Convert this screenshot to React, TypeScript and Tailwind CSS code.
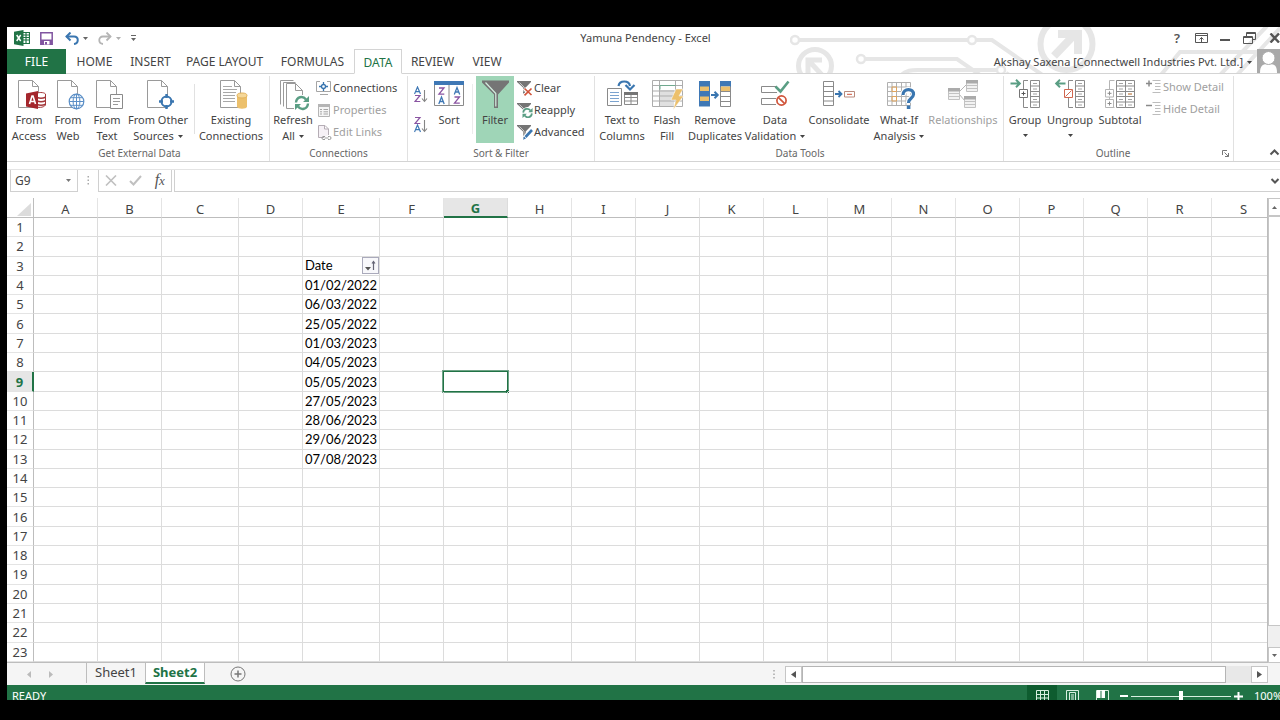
import type { FC, ReactNode } from 'react'
import { clsx } from 'clsx'

type ChildrenProps = { children?: ReactNode }

const Caret: FC<{ className?: string }> = ({ className }) => (
  <svg className={clsx('inline-block shrink-0', className)} width="5" height="3" viewBox="0 0 5 3" aria-hidden="true">
    <path d="M0 0h5L2.500 3z" fill="currentColor" />
  </svg>
)

/* ---------- ribbon icons, all on a 36x32 board ---------- */

const Board: FC<ChildrenProps> = ({ children }) => (
  <svg className="shrink-0" width="36" height="32" viewBox="0 0 36 32" fill="none" aria-hidden="true">
    {children}
  </svg>
)

const Page = () => (
  <>
    <path d="M7.500 1.500h14l6 6v21h-20z" fill="#fff" stroke="#9a9a9a" />
    <path d="M21.500 1.500v6h6" stroke="#9a9a9a" />
  </>
)

const AccessIcon = () => (
  <Board>
    <Page />
    <path d="M24 15c3-2 9-2 10.500 0v11c-2 3-8 3-10.500 1z" fill="#fff" stroke="#a4373a" />
    <path d="M26 18.500c3 1 6 .8 8.500-.3M26 22c3 1 6 .8 8.500-.3M26 25.500c3 1 6 .8 8.500-.3" stroke="#a4373a" strokeWidth="1.500" />
    <path d="M15 14.500l12-2.500v18l-12-2.500z" fill="#a4262c" />
    <path d="M18.500 25l2.500-8h1l2.500 8M19.500 22.500h4" stroke="#fff" strokeWidth="1.600" />
  </Board>
)

const WebIcon = () => (
  <Board>
    <Page />
    <circle cx="26.500" cy="22.500" r="7.300" fill="#fff" stroke="#5b8fc7" strokeWidth="1.200" />
    <ellipse cx="26.500" cy="22.500" rx="3.400" ry="7.300" stroke="#5b8fc7" />
    <path d="M19.200 22.500h14.600M20.300 18.700h12.400M20.300 26.300h12.400M26.500 15.200v14.600" stroke="#5b8fc7" />
  </Board>
)

const TextIcon = () => (
  <Board>
    <Page />
    <path d="M21.500 15.500h12v14h-12z" fill="#fff" stroke="#8a8a8a" />
    <path d="M24 19.500h7M24 22.500h7M24 25.500h5" stroke="#9a9a9a" />
  </Board>
)

const SourcesIcon = () => (
  <Board>
    <Page />
    <circle cx="26.500" cy="22.500" r="5" fill="#fff" stroke="#3a76b0" strokeWidth="2" />
    <path d="M26.500 15v4M26.500 26v4M19 22.500h4M30 22.500h4" stroke="#3a76b0" strokeWidth="2.400" />
  </Board>
)

const ExistingIcon = () => (
  <Board>
    <Page />
    <path d="M10 7.500h9M10 10.500h14M10 13.500h13M10 16.500h12M10 19.500h12M10 22.500h12" stroke="#a8a8a8" />
    <path d="M24 16.500v11c0 3 10 3 10 0v-11z" fill="#ecc06c" />
    <ellipse cx="29" cy="16.500" rx="5" ry="2.500" fill="#f5d798" stroke="#e3b25a" />
  </Board>
)

const RefreshArrows = () => (
  <>
    <path d="M1 6.500C1.500.500 8-.5 11 3.500M13 7.500C12.500 13.500 6 14.500 3 10.500" stroke="#5a9e84" strokeWidth="2.400" />
    <path d="M14 0v6H8zM0 14V8h6z" fill="#5a9e84" />
  </>
)

const RefreshAllIcon = () => (
  <Board>
    <path d="M5.500 25.500v-24h13M8.500 27.500v-24h12" stroke="#9a9a9a" />
    <path d="M11.500 4.500h9l7 7v18h-16z" fill="#fff" stroke="#9a9a9a" />
    <path d="M20.500 4.500v7h7" stroke="#9a9a9a" />
    <path d="M19 16h17v16H19z" fill="#fff" />
    <g transform="translate(20 17)">
      <RefreshArrows />
    </g>
  </Board>
)

const LETTER_A = 'M0 7L3 0l3 7M1.200 4.600h3.600'
const LETTER_Z = 'M.5.500h5L.5 6.500h5.300'

const SortIcon = () => (
  <Board>
    <path d="M3.500 3.500h29v23h-29zM18 5v21" fill="#fff" stroke="#8a8a8a" />
    <path d="M3 2h30v4H3z" fill="#3f78b5" />
    <path d="M8 9h5l-5 6.200h5.300M23.500 18h5l-5 6.200h5.300" stroke="#8a55a2" strokeWidth="1.300" />
    <path d="M7.800 25l2.700-7 2.700 7M8.800 22.500h3.400M23.300 15.500l2.700-7 2.700 7M24.300 13h3.400" stroke="#3f78b5" strokeWidth="1.300" />
  </Board>
)

const FilterIcon = () => (
  <Board>
    <path d="M5 1.500h27v2L21 15.500V29h-4V15.500L5 3.500z" fill="#757575" />
    <path d="M8.500 3.500L18.800 14.500V27.500" stroke="#d5eee0" strokeWidth="1.200" />
  </Board>
)

const TextToColumnsIcon = () => (
  <Board>
    <path d="M3.500 9.500h14v17h-14z" fill="#fff" stroke="#8a8a8a" />
    <path d="M6 13.500h9M6 16.500h9M6 19.500h9M6 22.500h9" stroke="#7ba3cf" />
    <path d="M20.500 14.500h13v11h-13zM27 14v11M20.500 18.500h13M20.500 22h13" fill="#fff" stroke="#8a8a8a" />
    <path d="M20 13h14v3H20z" fill="#757575" />
    <path d="M14.500 7C15.500 1 25 1 26 7" stroke="#3a76b0" strokeWidth="2.200" />
    <path d="M21.500 6l4.500 4.500L30.500 6" stroke="#3a76b0" strokeWidth="2.200" />
  </Board>
)

const FlashFillIcon = () => (
  <Board>
    <path d="M10 11h15v17H10z" fill="#e0e0e0" />
    <path d="M3.500 1.500h30v26h-30zM3.500 6.500h30M3.500 12h30M3.500 17h30M3.500 22h30M10.500 1.500v26M26.500 1.500v26" stroke="#adadad" />
    <path d="M11 10.500V6.500h15.500" stroke="#6fa98f" />
    <path d="M27 10h7l-4 7h4.500L24 31l3-10h-5z" fill="#ecc06c" stroke="#fff" strokeWidth=".5" />
  </Board>
)

const RemoveDuplicatesIcon = () => (
  <Board>
    <path d="M2 2h11v25.500H2z" fill="#3f78b5" />
    <path d="M3 7.500h9v4.500H3zM3 17.500h9v4.500H3z" fill="#ecc06c" />
    <path d="M23.500 2.500h10v25h-10zM23.500 17.500h10M23.500 22.500h10" fill="#fff" stroke="#8a8a8a" />
    <path d="M23 2h11v5.500H23z" fill="#3f78b5" />
    <path d="M24 7.500h9v4.500h-9z" fill="#ecc06c" />
    <path d="M23.500 12.500h10" stroke="#8a8a8a" />
    <path d="M14 16h6M17.500 12.800l3.200 3.200-3.200 3.200" stroke="#3a76b0" strokeWidth="2" />
  </Board>
)

const ValidationIcon = () => (
  <Board>
    <path d="M20 7.500H4.500v6H20M19 19.500H4.500v6H19" stroke="#8a8a8a" />
    <path d="M18.500 7.500l5 5L31.500 2.500" stroke="#5a9e84" strokeWidth="2.600" />
    <circle cx="24.500" cy="21.500" r="4.600" fill="#fff" stroke="#d0543a" strokeWidth="1.700" />
    <path d="M21.300 18.300l6.400 6.400" stroke="#d0543a" strokeWidth="1.700" />
  </Board>
)

const ConsolidateIcon = () => (
  <Board>
    <path d="M2.500 2.500h10v24h-10zM2.500 7.500h10M2.500 12.500h10M2.500 17.500h10M2.500 22h10" stroke="#8a8a8a" />
    <path d="M14 15h6M17.500 12l3 3-3 3" stroke="#3a76b0" strokeWidth="1.800" />
    <path d="M23.500 12.500h10v5.500h-10z" stroke="#b98a7c" />
    <path d="M26 15.300h5" stroke="#d0543a" />
  </Board>
)

const WhatIfIcon = () => (
  <Board>
    <path d="M6.500 3.500h23v23h-23zM6.500 8h23M6.500 12.500h23M6.500 17.500h23M6.500 22h23M11 3.500v23M15.500 3.500v23M20.500 3.500v23M25 3.500v23" stroke="#b0b0b0" />
    <path d="M11 8h4.500v4.500H11zM11 17.500h4.500V22H11z" stroke="#e0a45c" />
    <path d="M22 16c0-7 11-7 10.500-.5-.3 4-5 3.800-5 8.500" stroke="#fff" strokeWidth="5.500" />
    <path d="M22 16c0-7 11-7 10.500-.5-.3 4-5 3.800-5 8.500" stroke="#3a76b0" strokeWidth="3.200" />
    <path d="M25.800 26.500h3.600V30h-3.600z" fill="#3a76b0" />
  </Board>
)

const MiniTable: FC<{ x: number; y: number }> = ({ x, y }) => (
  <g transform={`translate(${x} ${y})`}>
    <path d="M.5.500h11v11H.5zM.5 5.500h11M.5 8.500h11" fill="#f2f2f2" stroke="#c2c2c2" />
    <path d="M0 0h12v3.500H0z" fill="#ababab" />
  </g>
)

const RelationshipsIcon = () => (
  <Board>
    <path d="M14 13l7-7M14 15l6 7" stroke="#b5b5b5" />
    <MiniTable x={3} y={9} />
    <MiniTable x={21} y={1} />
    <MiniTable x={19} y={17} />
  </Board>
)

const OutlineGrid: FC<{ x: number }> = ({ x }) => (
  <g transform={`translate(${x} 0)`} stroke="#8a8a8a">
    <path d="M.5 1.500h9v27h-9zM.5 7h9M.5 12.500h9M.5 17.500h9M.5 23h9" />
    <path d="M3 4.500h4M3 10h4M3 15h4M3 20.500h4M3 26h4" strokeWidth=".8" />
  </g>
)

const GroupIcon = () => (
  <Board>
    <path d="M3.500 4.500h9M9 .8l3.800 3.700L9 8.200" stroke="#5a9e84" strokeWidth="2" />
    <path d="M21 1.500h-4.500v27H21" stroke="#8a8a8a" />
    <path d="M12.500 10.500h8v8h-8z" fill="#fff" stroke="#757575" />
    <path d="M14.500 14.500h4M16.500 12.500v4" stroke="#555" />
    <OutlineGrid x={23} />
  </Board>
)

const UngroupIcon = () => (
  <Board>
    <path d="M4 4.500h9.500M8 .8L4.200 4.500 8 8.200" stroke="#5a9e84" strokeWidth="2" />
    <path d="M21 1.500h-4.500v27H21" stroke="#8a8a8a" />
    <path d="M12.500 10.500h8v8h-8z" fill="#fff" stroke="#d0664f" />
    <path d="M13.500 17.500l6-6" stroke="#d0664f" />
    <OutlineGrid x={23} />
  </Board>
)

const SubtotalIcon = () => (
  <Board>
    <path d="M12.500 1.500h-5v27h5" stroke="#b5b5b5" />
    <path d="M3.500 10.500h8v7.500h-8zM3.500 20.500h8v8h-8z" fill="#fff" stroke="#b5b5b5" />
    <path d="M5.500 14.300h4M7.500 12.300v4M5.500 24.500h4M7.500 22.500v4" stroke="#8a8a8a" />
    <OutlineGrid x={14} />
    <OutlineGrid x={23} />
    <path d="M26 15h4" stroke="#e0904c" />
  </Board>
)

/* ---------- 16px icons ---------- */

const Small: FC<ChildrenProps> = ({ children }) => (
  <svg className="shrink-0" width="16" height="16" viewBox="0 0 16 16" fill="none" aria-hidden="true">
    {children}
  </svg>
)

const ConnectionsIcon = () => (
  <Small>
    <path d="M4 1.500H.5v10h14v-10H11M4 14.500h8" stroke="#a5a5a5" />
    <circle cx="7.500" cy="6.500" r="2" stroke="#3a76b0" strokeWidth="1.300" />
    <path d="M7.500 2v2.500M7.500 8.500V11M3 6.500h2.500M9.500 6.500H12" stroke="#3a76b0" strokeWidth="1.300" />
  </Small>
)

const PropertiesIcon = () => (
  <Small>
    <path d="M2.500 2.500h11v12h-11z" fill="#f6f6f6" stroke="#b5b5b5" />
    <path d="M2 2h12v3H2z" fill="#b5b5b5" />
    <path d="M4 7.500h2M4 9.800h2M4 12h2M7.500 7.500H12M7.500 9.800H12M7.500 12H12" stroke="#a5a5a5" />
  </Small>
)

const EditLinksIcon = () => (
  <Small>
    <path d="M8 13.500H2.500v-12H9l3.500 3.500v6M8.500 1.500V5h4" fill="#f6f1f6" stroke="#b5adb5" />
    <path d="M9 12.500H7a1.600 1.600 0 000 3h2M12 12.500h1.500a1.500 1.500 0 010 3H12M8.500 14h4" stroke="#9a9a9a" />
  </Small>
)

const SmallFunnel = () => (
  <>
    <path d="M0 1h14v1L8.700 7.500v6H6v-6L0 2z" fill="#757575" />
    <path d="M2.500 2.500L7 7v5" stroke="#ddd" strokeWidth=".8" />
  </>
)

const ClearIcon = () => (
  <Small>
    <SmallFunnel />
    <path d="M7 8.500l7.500 6.500M14.500 8L7.500 15.500" stroke="#fff" strokeWidth="3.500" />
    <path d="M7.500 8.500l7 6.500M14.500 8.500L7.500 15.300" stroke="#d0543a" strokeWidth="1.700" />
  </Small>
)

const ReapplyIcon = () => (
  <Small>
    <SmallFunnel />
    <circle cx="10.500" cy="10.500" r="5.500" fill="#fff" />
    <g transform="translate(5.500 6) scale(.72)">
      <RefreshArrows />
    </g>
  </Small>
)

const AdvancedIcon = () => (
  <Small>
    <SmallFunnel />
    <path d="M15 5.500L7.500 14" stroke="#fff" strokeWidth="4.500" />
    <path d="M15 6l-6.500 7" stroke="#3a76b0" strokeWidth="2.600" />
    <path d="M7 12.500l2 2-3 1.200z" fill="#3a76b0" />
  </Small>
)

const DetailIcon: FC<{ plus?: boolean }> = ({ plus }) => (
  <Small>
    <path d={plus ? 'M0 4.500h6M3 1.500v6' : 'M0 4.500h6'} stroke="#8a8a8a" strokeWidth="1.500" />
    <path d="M6.500 1.500h8M9 4.500h5.500M9 7.500h5.500M9 10.500h5.500M6.500 13.500h8" stroke="#bdbdbd" />
  </Small>
)

const SortDirIcon: FC<{ desc?: boolean }> = ({ desc }) => (
  <svg width="14" height="18" viewBox="0 0 14 18" fill="none" aria-hidden="true">
    <g transform="translate(.5 1)">
      <path d={desc ? LETTER_Z : LETTER_A} stroke={desc ? '#8a55a2' : '#3f78b5'} strokeWidth="1.200" />
    </g>
    <g transform="translate(.5 9)">
      <path d={desc ? LETTER_A : LETTER_Z} stroke={desc ? '#3f78b5' : '#8a55a2'} strokeWidth="1.200" />
    </g>
    <path d="M10.500 4v11.500M8 12.500l2.500 3 2.500-3" stroke="#858585" strokeWidth="1.100" />
  </svg>
)

/* ---------- ribbon parts ---------- */

type BigButtonProps = {
  icon: FC
  lines: string[]
  width: string
  caret?: boolean
  active?: boolean
  disabled?: boolean
}

const BigButton: FC<BigButtonProps> = ({ icon: Icon, lines, width, caret, active, disabled }) => (
  <button
    type="button"
    disabled={disabled}
    aria-pressed={active}
    className={clsx(
      'flex h-[67px] shrink-0 flex-col items-center pt-[3px] whitespace-nowrap',
      width,
      active && 'bg-[#9fd5b7]',
      disabled ? 'text-[#a0a0a0]' : 'text-[#444]',
    )}
  >
    <Icon />
    {lines.map((line, i) => (
      <span key={line} className={clsx('leading-4', i === 0 && 'mt-px')}>
        {line}
        {caret && lines.length > 1 && i === lines.length - 1 && <Caret className="mb-0.5 ml-1" />}
      </span>
    ))}
    {caret && lines.length === 1 && <Caret className="mt-1.5" />}
  </button>
)

type SmallButtonProps = ChildrenProps & { icon: ReactNode; disabled?: boolean }

const SmallButton: FC<SmallButtonProps> = ({ icon, disabled, children }) => (
  <button
    type="button"
    disabled={disabled}
    className={clsx('flex h-[22px] items-center gap-px whitespace-nowrap', disabled ? 'text-[#a0a0a0]' : 'text-[#444]')}
  >
    {icon}
    {children}
  </button>
)

const RibbonGroup: FC<ChildrenProps & { label: string; width: string; launcher?: boolean }> = ({ label, width, launcher, children }) => (
  <section aria-label={label} className={clsx('flex shrink-0 flex-col border-r border-[#e1e1e1]', width)}>
    <div className="flex h-[70px] items-start">{children}</div>
    <div className="flex h-4 items-center text-[10px] text-[#666]">
      <span className="flex-1 text-center">{label}</span>
      {launcher && (
        <button type="button" aria-label={`${label} settings`} className="mr-1">
          <svg width="7" height="7" viewBox="0 0 7 7" fill="none">
            <path d="M.5 5V.5H5M2.500 2.500l4 4M6.500 3v3.500H3" stroke="#777" />
          </svg>
        </button>
      )}
    </div>
  </section>
)

const Ribbon = () => (
  <div className="flex h-[88px] shrink-0 border-b border-[#d4d4d4] bg-white pt-0.5 text-[11px]">
    <RibbonGroup label="Get External Data" width="w-[263px] pl-[3px]">
      <BigButton icon={AccessIcon} lines={['From', 'Access']} width="w-[38px]" />
      <BigButton icon={WebIcon} lines={['From', 'Web']} width="w-10" />
      <BigButton icon={TextIcon} lines={['From', 'Text']} width="w-[38px]" />
      <BigButton icon={SourcesIcon} lines={['From Other', 'Sources']} width="w-16" caret />
      <div className="mx-1 mt-2 h-[50px] w-px bg-[#e1e1e1]" />
      <BigButton icon={ExistingIcon} lines={['Existing', 'Connections']} width="w-16" />
    </RibbonGroup>

    <RibbonGroup label="Connections" width="w-[138px]">
      <BigButton icon={RefreshAllIcon} lines={['Refresh', 'All']} width="w-[46px]" caret />
      <div className="flex flex-col pt-px">
        <SmallButton icon={<ConnectionsIcon />}>Connections</SmallButton>
        <SmallButton icon={<PropertiesIcon />} disabled>Properties</SmallButton>
        <SmallButton icon={<EditLinksIcon />} disabled>Edit Links</SmallButton>
      </div>
    </RibbonGroup>

    <RibbonGroup label="Sort & Filter" width="w-[187px]">
      <div className="flex flex-col gap-3 pt-2.5 pl-1.5">
        <button type="button" aria-label="Sort A to Z"><SortDirIcon /></button>
        <button type="button" aria-label="Sort Z to A"><SortDirIcon desc /></button>
      </div>
      <BigButton icon={SortIcon} lines={['Sort']} width="w-[42px]" />
      <div className="mt-2 mr-[3px] ml-0.5 h-[50px] w-px bg-[#ececec]" />
      <BigButton icon={FilterIcon} lines={['Filter']} width="w-[38px]" active />
      <div className="flex flex-col pt-px pl-[3px]">
        <SmallButton icon={<ClearIcon />}>Clear</SmallButton>
        <SmallButton icon={<ReapplyIcon />}>Reapply</SmallButton>
        <SmallButton icon={<AdvancedIcon />}>Advanced</SmallButton>
      </div>
    </RibbonGroup>

    <RibbonGroup label="Data Tools" width="w-[409px] pl-0.5">
      <BigButton icon={TextToColumnsIcon} lines={['Text to', 'Columns']} width="w-[50px]" />
      <BigButton icon={FlashFillIcon} lines={['Flash', 'Fill']} width="w-10" />
      <BigButton icon={RemoveDuplicatesIcon} lines={['Remove', 'Duplicates']} width="w-14" />
      <BigButton icon={ValidationIcon} lines={['Data', 'Validation']} width="w-16" caret />
      <BigButton icon={ConsolidateIcon} lines={['Consolidate']} width="w-16" />
      <BigButton icon={WhatIfIcon} lines={['What-If', 'Analysis']} width="w-14" caret />
      <BigButton icon={RelationshipsIcon} lines={['Relationships']} width="w-[72px]" disabled />
    </RibbonGroup>

    <RibbonGroup label="Outline" width="w-[230px]" launcher>
      <BigButton icon={GroupIcon} lines={['Group']} width="w-[42px]" caret />
      <BigButton icon={UngroupIcon} lines={['Ungroup']} width="w-12" caret />
      <BigButton icon={SubtotalIcon} lines={['Subtotal']} width="w-[52px]" />
      <div className="flex flex-col">
        <SmallButton icon={<DetailIcon plus />} disabled>Show Detail</SmallButton>
        <SmallButton icon={<DetailIcon />} disabled>Hide Detail</SmallButton>
      </div>
    </RibbonGroup>

    <button type="button" aria-label="Collapse the ribbon" className="mt-auto mb-1 ml-auto flex h-2.5 items-center">
      <svg width="11" height="8" viewBox="0 0 11 8" fill="none">
        <path d="M1.500 6.500l4-4 4 4" stroke="#555" strokeWidth="2" />
      </svg>
    </button>
  </div>
)

/* ---------- title bar and tabs ---------- */

const tabs = [
  { name: 'HOME', width: 'w-[57px]' },
  { name: 'INSERT', width: 'w-[55px]' },
  { name: 'PAGE LAYOUT', width: 'w-[93px]' },
  { name: 'FORMULAS', width: 'w-[83px]' },
  { name: 'DATA', width: 'w-12', active: true },
  { name: 'REVIEW', width: 'w-[61px]' },
  { name: 'VIEW', width: 'w-12' },
]

const CircuitArt = () => (
  <svg className="absolute top-0 right-0" width="490" height="47" viewBox="790 27 490 47" fill="none" stroke="#e6e6e6" strokeWidth="4" aria-hidden="true">
    <path d="M799 40h169M976 40h16l52 36M865 59h92l26 18M900 76c6-6 12-6 18-6h79M1006 73l8 5" />
    <g strokeWidth="2.500">
      <circle cx="795" cy="40" r="4" />
      <circle cx="972" cy="40" r="4" />
      <circle cx="861" cy="59" r="4" />
      <circle cx="1001" cy="70" r="4" />
    </g>
    <circle cx="815" cy="66" r="16.500" strokeWidth="5" />
    <path d="M823 76l-14-15M808 74V60h14" strokeWidth="5" />
    <circle cx="1066.500" cy="44" r="26" strokeWidth="6" />
    <path d="M1054 56l22-23M1058 34h20v20" strokeWidth="8" />
    <path d="M1160 76l20-24h77M1219 76l48-50M1236 76l46-50" />
  </svg>
)

const TitleBar = () => (
  <div className="relative flex h-[22px] items-center text-[11px] text-[#444]">
    <div className="flex flex-1 items-center">
      <svg className="ml-[7px]" width="16" height="16" viewBox="0 0 16 16" fill="none" aria-hidden="true">
        <path d="M8 2.500h7.500v11H8M12 2.500v11M8.500 5h7M8.500 7.500h7M8.500 10h7" stroke="#217346" strokeWidth="1.200" />
        <path d="M0 1.800L9.500 0v16L0 14.200z" fill="#217346" />
        <path d="M2.700 5l4 6M6.700 5l-4 6" stroke="#fff" strokeWidth="1.500" />
      </svg>
      <button type="button" aria-label="Save" className="ml-2.5">
        <svg width="13" height="13" viewBox="0 0 13 13" fill="none">
          <path d="M.8.800h11.400v11.400H.8z" fill="#fff" stroke="#8055a0" strokeWidth="1.500" />
          <path d="M1 7.500h11v5H1z" fill="#8055a0" />
          <path d="M4 9h5.500v3.500H4z" fill="#fff" />
          <path d="M5 10h2v2.500H5z" fill="#8055a0" />
        </svg>
      </button>
      <button type="button" aria-label="Undo" className="ml-3 flex items-center gap-1 text-[#666]">
        <svg width="14" height="13" viewBox="0 0 14 13" fill="none">
          <path d="M1.500 4.500h7.500c5 0 5 7 0 7.500" stroke="#3a76b0" strokeWidth="2" />
          <path d="M5.500.500l-4 4 4 4" stroke="#3a76b0" strokeWidth="2" />
        </svg>
        <Caret />
      </button>
      <button type="button" aria-label="Redo" className="ml-2.5 flex items-center gap-1 text-[#b0b0b0]">
        <svg width="14" height="13" viewBox="0 0 14 13" fill="none">
          <path d="M12.500 4.500H5c-5 0-5 7 0 7.500" stroke="#b5b5b5" strokeWidth="1.800" />
          <path d="M8.500.500l4 4-4 4" stroke="#b5b5b5" strokeWidth="1.800" />
        </svg>
        <Caret />
      </button>
      <button type="button" aria-label="Customize toolbar" className="ml-2.5">
        <svg width="5" height="6" viewBox="0 0 5 6">
          <path d="M0 0h5v1H0zM0 3h5L2.500 6z" fill="#666" />
        </svg>
      </button>
    </div>
    <h1 className="pt-px pl-1">Yamuna Pendency - Excel</h1>
    <div className="flex flex-1 items-center justify-end text-[#555]">
      <button type="button" aria-label="Help" className="w-6 text-[13px] leading-4 font-semibold">?</button>
      <button type="button" aria-label="Ribbon display options" className="flex w-6 justify-center">
        <svg width="13" height="11" viewBox="0 0 13 11" fill="none" stroke="currentColor">
          <path d="M.5.500h12v9H.5zM.5 2.500h12M6.500 9V4.500M4.500 6.500l2-2 2 2" />
        </svg>
      </button>
      <button type="button" aria-label="Minimize" className="flex w-6 justify-center pt-1">
        <svg width="10" height="2"><path d="M0 0h10v2H0z" fill="currentColor" /></svg>
      </button>
      <button type="button" aria-label="Restore" className="flex w-6 justify-center">
        <svg width="13" height="12" viewBox="0 0 13 12" fill="none" stroke="currentColor">
          <path d="M3.500 4V.500h9v7H10M3 1.500h10M.5 4.500h9v7h-9zM.5 5.500h9" />
        </svg>
      </button>
      <button type="button" aria-label="Close" className="flex w-[19px] justify-end">
        <svg width="11" height="10" viewBox="0 0 11 10" fill="none">
          <path d="M1.500.500l8.500 9M10 .5l-8.500 9" stroke="currentColor" strokeWidth="2.400" />
        </svg>
      </button>
    </div>
  </div>
)

const TabBar = () => (
  <nav className="relative flex h-[25px] text-[12px] text-[#444]">
    <button type="button" className="w-[59px] bg-[#217346] pt-px text-white">FILE</button>
    {tabs.map((tab) => (
      <button
        key={tab.name}
        type="button"
        className={clsx(
          'border-b pt-0.5 whitespace-nowrap',
          tab.width,
          tab.active ? 'border-x border-t border-x-[#d4d4d4] border-t-[#d4d4d4] border-b-white bg-white text-[#217346]' : 'border-[#d4d4d4]',
        )}
      >
        {tab.name}
      </button>
    ))}
    <div className="flex flex-1 items-center justify-end border-b border-[#d4d4d4] text-[11px]">
      <button type="button" className="flex items-center gap-1 pt-0.5 whitespace-nowrap">
        Akshay Saxena [Connectwell Industries Pvt. Ltd.]
        <Caret />
      </button>
      <svg className="ml-[5px]" width="23" height="24" viewBox="0 0 23 24" aria-hidden="true">
        <path d="M0 0h23v24H0z" fill="#a9a9a9" />
        <path d="M3 24c0-8 3-9 8.500-9s8.500 1 8.500 9z" fill="#fff" />
        <circle cx="11.500" cy="9" r="6.500" fill="#fff" stroke="#a9a9a9" />
      </svg>
    </div>
  </nav>
)

const FormulaBar = () => (
  <div className="mt-[7px] flex h-[23px] shrink-0 border-t border-[#e4e4e4] pl-[3px] text-[#444]">
    <div className="flex w-[68px] items-center border-x border-b border-[#d0d0d0] text-[#777]">
      <input aria-label="Name box" defaultValue="G9" className="w-12 min-w-0 pl-1 text-[12px] text-[#444] outline-none" />
      <button type="button" aria-label="Named ranges" className="flex flex-1 justify-center"><Caret /></button>
    </div>
    <svg className="mx-2 mt-1.5 shrink-0" width="4" height="9" viewBox="0 0 4 9" aria-hidden="true">
      <path d="M1.500 0h1.500v1.500H1.500zM1.500 3.500h1.500V5H1.500zM1.500 7h1.500v1.500H1.500z" fill="#aaa" />
    </svg>
    <div className="flex w-[74px] items-center justify-around border-x border-b border-[#d0d0d0]">
      <button type="button" aria-label="Cancel">
        <svg width="12" height="11" viewBox="0 0 12 11" fill="none">
          <path d="M1 .5l10 10M11 .5L1 10.500" stroke="#c0c0c0" strokeWidth="1.600" />
        </svg>
      </button>
      <button type="button" aria-label="Enter">
        <svg width="13" height="11" viewBox="0 0 13 11" fill="none">
          <path d="M1 6l3.500 3.500L12 1" stroke="#c0c0c0" strokeWidth="2" />
        </svg>
      </button>
      <button type="button" aria-label="Insert function" className="font-['Liberation_Serif',serif] text-[16px] leading-4 text-[#555] italic">
        f<span className="text-[13px]">x</span>
      </button>
    </div>
    <div className="ml-0.5 flex flex-1 items-center border-b border-l border-[#d0d0d0]">
      <input aria-label="Formula" className="min-w-0 flex-1 px-1 text-[12px] outline-none" />
      <button type="button" aria-label="Expand formula bar">
        <svg width="10" height="8" viewBox="0 0 10 8" fill="none">
          <path d="M1.500 2l3.500 3.500L8.500 2" stroke="#555" strokeWidth="2" />
        </svg>
      </button>
    </div>
  </div>
)

/* ---------- sheet ---------- */

const columns = 'ABCDEFGHIJKLMNOPQRS'.split('')
const rows = Array.from({ length: 23 }, (_, i) => i + 1)

const dates: Record<number, string> = {
  4: '01/02/2022',
  5: '06/03/2022',
  6: '25/05/2022',
  7: '01/03/2023',
  8: '04/05/2023',
  9: '05/05/2023',
  10: '27/05/2023',
  11: '28/06/2023',
  12: '29/06/2023',
  13: '07/08/2023',
}

const columnWidth = (name: string) => {
  if (name === 'C' || name === 'E') return 'w-[77px]'
  return 'w-16'
}

const Cell: FC<{ column: string; row: number }> = ({ column, row }) => {
  const selected = column === 'G' && row === 9
  return (
    <td className="relative border-r border-b border-[#dcdcdc] p-0 font-[Lato,sans-serif] text-[13px] leading-[17px] text-black">
      {column === 'E' && row === 3 && (
        <div className="flex items-center justify-between pl-0.5">
          Date
          <button type="button" aria-label="Filter dates" className="flex h-[17px] w-[17px] items-center justify-center border border-[#aab] bg-[#f8f8fb]">
            <svg width="13" height="12" viewBox="0 0 13 12" fill="none">
              <path d="M1 7h6L4 10.500z" fill="#555" />
              <path d="M9.500 10V2M8 3.500L9.500 1.500 11 3.500" stroke="#667" strokeWidth="1.200" />
            </svg>
          </button>
        </div>
      )}
      {column === 'E' && dates[row] && <div className="pt-px pr-0.5 text-right">{dates[row]}</div>}
      {selected && (
        <div className="absolute -top-px -right-px -bottom-px -left-px border border-[#217346] outline outline-[#6fa386]">
          <span className="absolute -right-0.5 -bottom-0.5 h-[3px] w-[3px] bg-[#217346]" />
        </div>
      )}
    </td>
  )
}

const Sheet = () => (
  <div className="mt-1.5 flex min-h-0 flex-1">
    <div className="min-w-0 flex-1 overflow-hidden border-r border-b border-[#bdbdbd]">
      <table className="h-full w-[1269px] table-fixed border-separate border-spacing-0 text-[13px] text-[#444]">
        <thead>
          <tr>
            <th aria-label="Select all" className="h-5 w-[27px] border-r border-b border-[#bdbdbd] p-0">
              <svg className="mt-1 mr-0.5 ml-auto" width="14" height="13" viewBox="0 0 14 13" aria-hidden="true">
                <path d="M14 0v13H0z" fill="#dcdcdc" />
              </svg>
            </th>
            {columns.map((name) => (
              <th
                key={name}
                scope="col"
                className={clsx(
                  'h-5 border-b p-0 pt-0.5 leading-4',
                  columnWidth(name),
                  name === 'G'
                    ? 'border-r border-b-2 border-r-[#dcdcdc] border-b-[#217346] bg-[#e6e6e6] font-bold text-[#217346]'
                    : 'border-r border-r-[#e4e4e4] border-b-[#bdbdbd] font-normal',
                )}
              >
                {name}
              </th>
            ))}
          </tr>
        </thead>
        <tbody>
          {rows.map((row) => (
            <tr key={row}>
              <th
                scope="row"
                className={clsx(
                  'border-b border-b-[#e4e4e4] p-0 pt-px leading-[17px]',
                  row === 9
                    ? 'border-r-2 border-r-[#217346] bg-[#e6e6e6] font-bold text-[#217346]'
                    : 'border-r border-r-[#bdbdbd] font-normal',
                )}
              >
                {row}
              </th>
              {columns.map((column) => (
                <Cell key={column} column={column} row={row} />
              ))}
            </tr>
          ))}
        </tbody>
      </table>
    </div>
    <div className="flex w-3 flex-col overflow-hidden bg-[#f0f0f0] text-[#666]">
      <button type="button" aria-label="Scroll up" className="flex h-[18px] items-center justify-center border border-r-0 border-[#c6c6c6] bg-white">
        <Caret className="rotate-180" />
      </button>
      <div className="mb-[21px] flex-1 border border-r-0 border-[#c6c6c6] bg-white" />
      <button type="button" aria-label="Scroll down" className="flex h-4 items-center justify-center border border-r-0 border-[#c6c6c6] bg-white">
        <Caret />
      </button>
    </div>
  </div>
)

const SheetTabs = () => (
  <div className="flex h-[22px] shrink-0 items-start bg-[#f5f5f5] text-[13px] text-[#444]">
    <div className="flex h-[22px] w-[79px] items-center gap-[18px] pl-5 text-[#bbb]">
      <button type="button" aria-label="Previous sheet">
        <svg width="4" height="7" viewBox="0 0 4 7"><path d="M4 0v7L0 3.500z" fill="currentColor" /></svg>
      </button>
      <button type="button" aria-label="Next sheet">
        <svg width="4" height="7" viewBox="0 0 4 7"><path d="M0 0v7l4-3.500z" fill="currentColor" /></svg>
      </button>
    </div>
    <button type="button" className="h-5 w-[59px] border-l border-[#bdbdbd]">Sheet1</button>
    <button type="button" className="h-[21px] w-[60px] border-x border-b-2 border-x-[#bdbdbd] border-b-[#217346] bg-white font-bold text-[#217346]">Sheet2</button>
    <button type="button" aria-label="New sheet" className="mt-[3px] ml-[25px]">
      <svg width="16" height="16" viewBox="0 0 16 16" fill="none" stroke="#777">
        <circle cx="8" cy="8" r="7" />
        <path d="M4.500 8h7M8 4.500v7" strokeWidth="1.500" />
      </svg>
    </button>
    <div className="ml-auto flex h-[22px] items-center text-[#555]">
      <svg className="mr-[10px]" width="2" height="9" viewBox="0 0 2 9" aria-hidden="true">
        <path d="M0 0h2v1.500H0zM0 3.500h2V5H0zM0 7h2v1.500H0z" fill="#bbb" />
      </svg>
      <button type="button" aria-label="Scroll left" className="flex h-[17px] w-[17px] items-center justify-center border border-[#c6c6c6] bg-white">
        <svg width="5" height="7" viewBox="0 0 5 7"><path d="M5 0v7L0 3.500z" fill="currentColor" /></svg>
      </button>
      <div className="flex h-[17px] w-[449px] bg-[#e8e8e8]">
        <div className="w-[424px] border border-[#b5b5b5] bg-white" />
      </div>
      <button type="button" aria-label="Scroll right" className="mr-3 flex h-[17px] w-[17px] items-center justify-center border border-[#c6c6c6] bg-white">
        <svg width="5" height="7" viewBox="0 0 5 7"><path d="M0 0v7l5-3.500z" fill="currentColor" /></svg>
      </button>
    </div>
  </div>
)

const StatusBar = () => (
  <footer className="h-[15px] shrink-0 overflow-hidden bg-[#217346] text-white">
    <div className="flex h-[22px] items-center pl-[5px] text-[11px]">
      <span>READY</span>
      <div className="ml-auto flex h-full items-center">
        <button type="button" aria-label="Normal view" className="flex h-full w-[30px] items-center justify-center bg-[#0e5c2f]">
          <svg width="13" height="12" viewBox="0 0 13 12" fill="none" stroke="#d8f0e0">
            <path d="M.5.500h12v11H.5zM4.500.500v11M8.500.500v11M.5 4.500h12M.5 8h12" />
          </svg>
        </button>
        <button type="button" aria-label="Page layout view" className="flex h-full w-[30px] items-center justify-center">
          <svg width="13" height="12" viewBox="0 0 13 12" fill="none" stroke="#d8f0e0">
            <path d="M.5.500h12v11H.5zM3.500 12V2.500h6V12M5 5h3M5 7h3M5 9h3" />
          </svg>
        </button>
        <button type="button" aria-label="Page break view" className="flex h-full w-[30px] items-center justify-center">
          <svg width="13" height="12" viewBox="0 0 13 12" fill="none">
            <path d="M.5.500h12v11H.5z" stroke="#d8f0e0" />
            <path d="M1 0h3.500v8H1zM5.500 0H9v8H5.500z" fill="#fff" />
          </svg>
        </button>
        <button type="button" aria-label="Zoom out" className="ml-[3px]">
          <svg width="8" height="2"><path d="M0 0h8v2H0z" fill="#fff" /></svg>
        </button>
        <input
          type="range"
          aria-label="Zoom"
          min={0}
          max={100}
          defaultValue={50}
          className="mx-[3px] h-3 w-[100px] appearance-none bg-[linear-gradient(#d8f0e0,#d8f0e0)] bg-[length:100%_1px] bg-center bg-no-repeat [&::-webkit-slider-thumb]:h-2.5 [&::-webkit-slider-thumb]:w-1 [&::-webkit-slider-thumb]:appearance-none [&::-webkit-slider-thumb]:bg-white"
        />
        <button type="button" aria-label="Zoom in">
          <svg width="9" height="9" viewBox="0 0 9 9"><path d="M0 3.500h9v2H0zM3.500 0h2v9h-2z" fill="#fff" /></svg>
        </button>
        <span className="ml-[11px] w-[26px]">100%</span>
      </div>
    </div>
  </footer>
)

const App = () => (
  <div className="h-screen overflow-hidden bg-black pt-[27px] pb-5 pl-[7px] font-['Noto_Sans','Open_Sans',sans-serif]">
    <main className="flex h-full flex-col overflow-hidden bg-white">
      <header className="relative shrink-0">
        <CircuitArt />
        <TitleBar />
        <TabBar />
      </header>
      <Ribbon />
      <FormulaBar />
      <Sheet />
      <SheetTabs />
      <StatusBar />
    </main>
  </div>
)

export default App
